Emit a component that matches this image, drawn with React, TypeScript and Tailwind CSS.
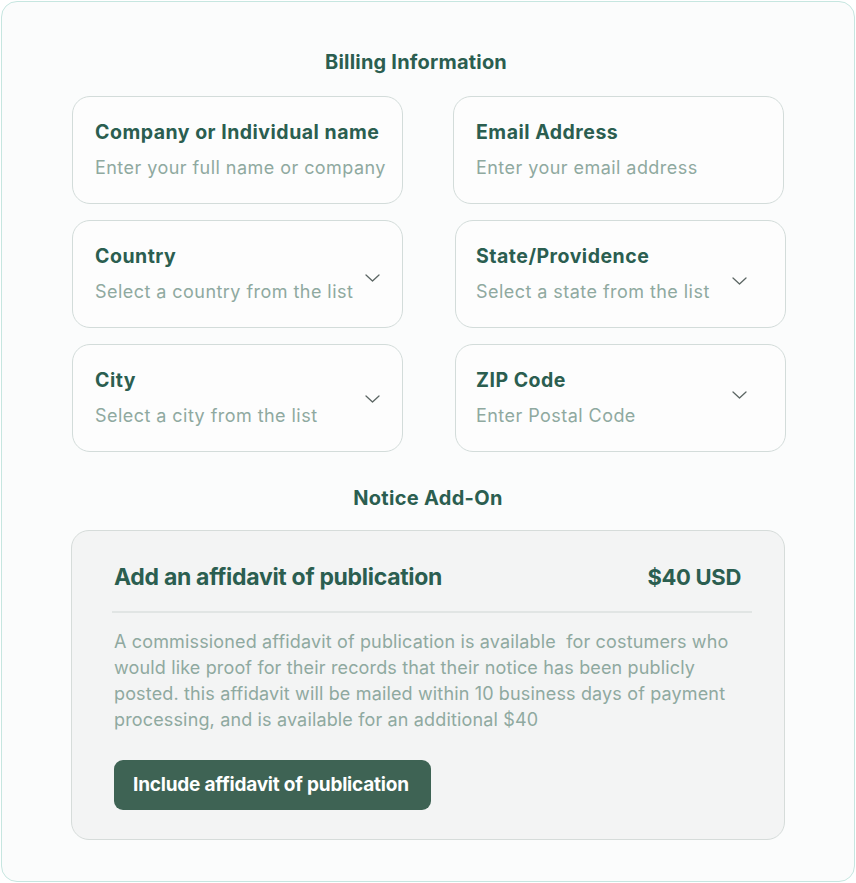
import React from 'react';

type Field = {
  label: string;
  placeholder: string;
  select?: boolean;
  shift?: boolean;
  chevron?: string;
};

const fields: Field[] = [
  { label: 'Company or Individual name', placeholder: 'Enter your full name or company' },
  { label: 'Email Address', placeholder: 'Enter your email address' },
  { label: 'Country', placeholder: 'Select a country from the list', select: true, chevron: 'mr-[22px] mt-[8px]' },
  { label: 'State/Providence', placeholder: 'Select a state from the list', select: true, shift: true, chevron: 'mr-[38px] mt-[14px]' },
  { label: 'City', placeholder: 'Select a city from the list', select: true, chevron: 'mr-[22px] mt-[2px]' },
  { label: 'ZIP Code', placeholder: 'Enter Postal Code', select: true, shift: true, chevron: 'mr-[38px] mt-[-6px]' },
];

const Chevron = ({ className }: { className?: string }) => (
  <svg width="15" height="8" viewBox="0 0 15 8" fill="none" className={`shrink-0 ${className ?? ''}`}>
    <path d="M1 1l6.5 6 6.5-6" stroke="#5c6664" strokeWidth="1.3" strokeLinecap="round" strokeLinejoin="round" />
  </svg>
);

const FieldBox = ({ field }: { field: Field }) => (
  <div
    className={`flex h-[108px] w-[331px] items-center justify-between rounded-[18px] border border-[#d3dcda] bg-[#fdfdfd] ${
      field.shift ? 'ml-[2px] pl-[20px]' : 'pl-[22px]'
    }`}
  >
    <div className="flex flex-col gap-[10px] whitespace-nowrap">
      <span className="text-[19.5px] font-bold leading-[26px] tracking-[0.5px] text-[#2b5e50]">{field.label}</span>
      <span className="text-[18px] leading-[26px] tracking-[0.45px] text-[#8fa9a0]">{field.placeholder}</span>
    </div>
    {field.select && <Chevron className={field.chevron} />}
  </div>
);

export default function App() {
  return (
    <div className="bg-white p-px font-['Inter','Lato',sans-serif]">
      <div className="flex h-[881px] flex-col items-center rounded-[16px] border border-[#c6e6e0] bg-[#fbfcfc] px-[70px] pt-[46px]">
        <h2 className="mr-[24px] text-[20px] font-bold leading-[28px] tracking-[0.2px] text-[#2b5e50]">
          Billing Information
        </h2>

        <div className="mt-[20px] grid grid-cols-[331px_331px] gap-x-[50px] gap-y-[16px]">
          {fields.map((f) => (
            <FieldBox key={f.label} field={f} />
          ))}
        </div>

        <h2 className="mt-[32px] text-[20px] font-bold leading-[28px] tracking-[0.3px] text-[#2b5e50]">
          Notice Add-On
        </h2>

        <div className="mt-[18px] w-[714px] rounded-[18px] border border-[#d6dcda] bg-[#f3f4f4] pt-[31px] pb-[29px] pl-[42px] pr-[32px]">
          <div className="flex items-center justify-between pr-[11px]">
            <span className="text-[23px] font-bold leading-[30px] tracking-[-0.3px] text-[#2b5e50]">
              Add an affidavit of publication
            </span>
            <span className="text-[22px] font-bold leading-[30px] tracking-[-0.3px] text-[#2b5e50]">$40 USD</span>
          </div>
          <div className="mt-[19px] ml-[-2px] h-[2px] bg-[#e1e5e4]" />
          <p className="mt-[16px] text-[18px] leading-[26px] tracking-[0.15px] text-[#8fa9a0]">
            A commissioned affidavit of publication is available&nbsp; for costumers who would like proof for their
            records that their notice has been publicly posted. this affidavit will be mailed within 10 business days
            of payment processing, and is available for an additional $40
          </p>
          <button className="mt-[27px] h-[50px] rounded-[9px] bg-[#3e6354] pl-[19px] pr-[22px] text-[19px] font-bold tracking-[-0.2px] text-white">
            Include affidavit of publication
          </button>
        </div>
      </div>
    </div>
  );
}
